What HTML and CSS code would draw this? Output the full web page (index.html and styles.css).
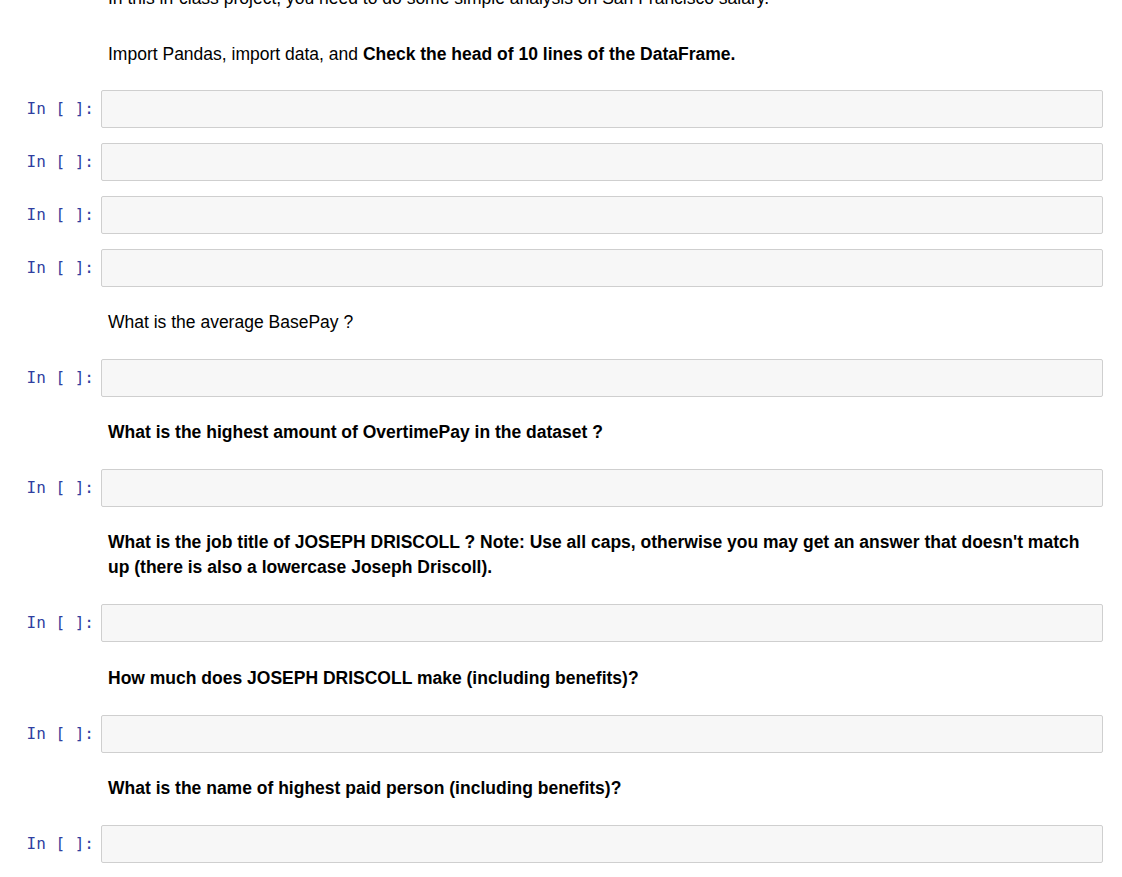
FILE: index.html
```html
<!DOCTYPE html>
<html>
<head>
<meta charset="utf-8">
<link rel="stylesheet" href="styles.css">
</head>
<body>
<div class="notebook">
  <div class="md md-intro"><div class="prompt"></div><div class="md-text">In this in-class project, you need to do some simple analysis on San Francisco salary.</div></div>
  <div class="md md-first"><div class="prompt"></div><div class="md-text">Import Pandas, import data, and <b>Check the head of 10 lines of the DataFrame.</b></div></div>
  <div class="code"><div class="prompt">In [ ]:</div><div class="input-area"></div></div>
  <div class="code"><div class="prompt">In [ ]:</div><div class="input-area"></div></div>
  <div class="code"><div class="prompt">In [ ]:</div><div class="input-area"></div></div>
  <div class="code"><div class="prompt">In [ ]:</div><div class="input-area"></div></div>
  <div class="md"><div class="prompt"></div><div class="md-text">What is the average BasePay ?</div></div>
  <div class="code"><div class="prompt">In [ ]:</div><div class="input-area"></div></div>
  <div class="md"><div class="prompt"></div><div class="md-text"><b>What is the highest amount of OvertimePay in the dataset ?</b></div></div>
  <div class="code"><div class="prompt">In [ ]:</div><div class="input-area"></div></div>
  <div class="md"><div class="prompt"></div><div class="md-text"><b>What is the job title of JOSEPH DRISCOLL ? Note: Use all caps, otherwise you may get an answer that doesn't match up (there is also a lowercase Joseph Driscoll).</b></div></div>
  <div class="code"><div class="prompt">In [ ]:</div><div class="input-area"></div></div>
  <div class="md md-late"><div class="prompt"></div><div class="md-text"><b>How much does JOSEPH DRISCOLL make (including benefits)?</b></div></div>
  <div class="code"><div class="prompt">In [ ]:</div><div class="input-area"></div></div>
  <div class="md"><div class="prompt"></div><div class="md-text"><b>What is the name of highest paid person (including benefits)?</b></div></div>
  <div class="code"><div class="prompt">In [ ]:</div><div class="input-area"></div></div>
</div>
</body>
</html>
```

FILE: styles.css
```css
html, body {
  margin: 0;
  padding: 0;
  background: #ffffff;
  overflow: hidden;
}

.notebook {
  display: flex;
  flex-direction: column;
  margin-top: -14px;
  padding-right: 19px;
  font-family: "Liberation Sans", Arial, sans-serif;
  color: #000000;
}

.code, .md {
  display: flex;
  flex-direction: row;
}

.prompt {
  flex: 0 0 94px;
  width: 94px;
  padding-right: 7px;
  text-align: right;
  font-family: "DejaVu Sans Mono", monospace;
  font-size: 16px;
  color: #303F9F;
  line-height: 38px;
  white-space: pre;
}

.input-area {
  flex: 1;
  height: 36px;
  border: 1px solid #cfcfcf;
  border-radius: 2px;
  background: #f7f7f7;
}

.code + .code {
  margin-top: 15px;
}

.md {
  margin-top: 23px;
  margin-bottom: 24px;
}

.md-intro {
  margin-top: 0;
  margin-bottom: 31px;
}

.md-first {
  margin-top: 0;
  margin-bottom: 23px;
}

.md-late {
  margin-top: 24px;
}

.md-text {
  flex: 1;
  padding-left: 7px;
  font-size: 17.5px;
  line-height: 25px;
}

.md-text b {
  font-weight: bold;
}
```
